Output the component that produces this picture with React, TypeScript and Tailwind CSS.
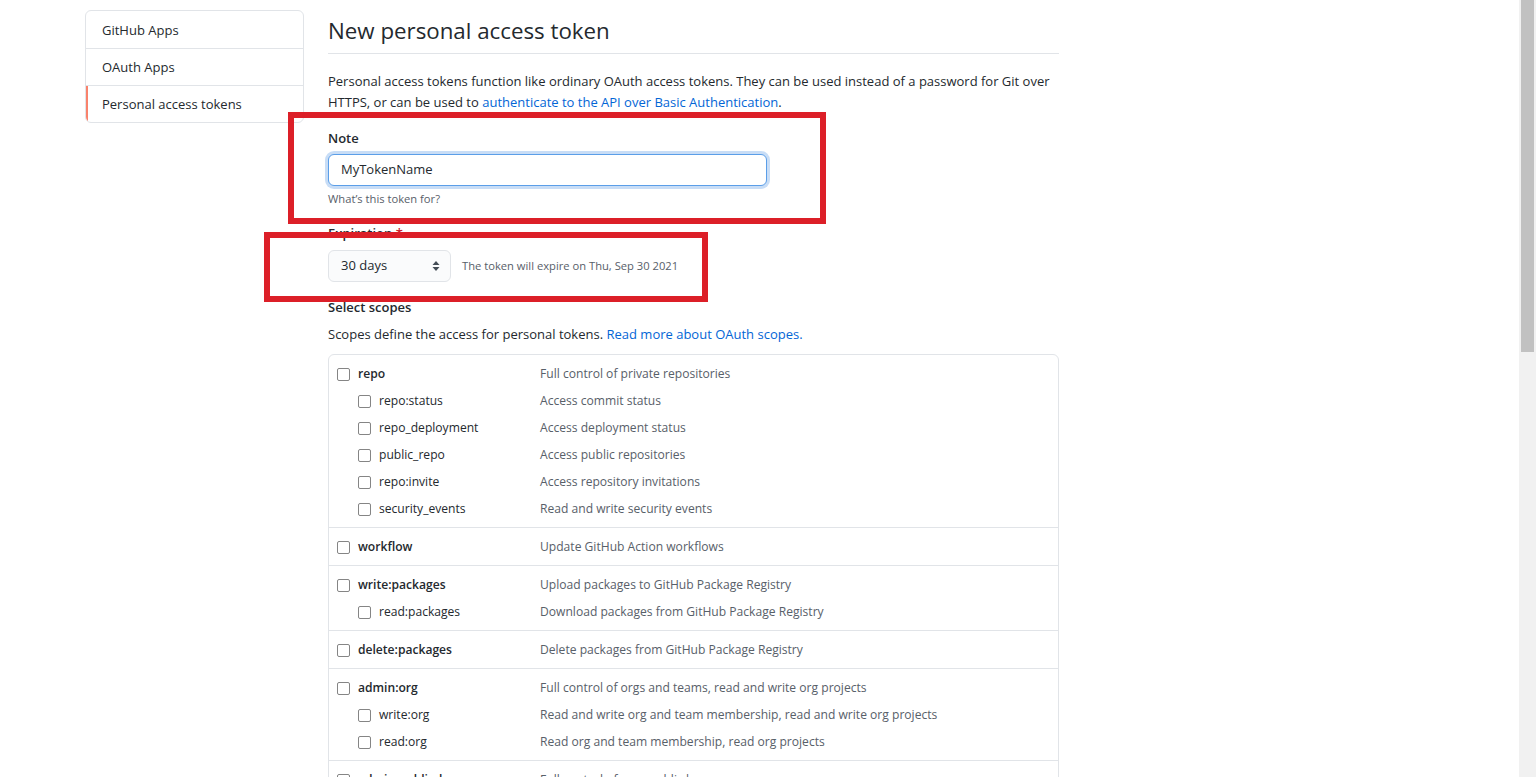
import React from "react";

interface Scope {
  name: string;
  description: string;
  children?: { name: string; description: string }[];
}

const scopes: Scope[] = [
  {
    name: "repo",
    description: "Full control of private repositories",
    children: [
      { name: "repo:status", description: "Access commit status" },
      { name: "repo_deployment", description: "Access deployment status" },
      { name: "public_repo", description: "Access public repositories" },
      { name: "repo:invite", description: "Access repository invitations" },
      { name: "security_events", description: "Read and write security events" },
    ],
  },
  { name: "workflow", description: "Update GitHub Action workflows" },
  {
    name: "write:packages",
    description: "Upload packages to GitHub Package Registry",
    children: [
      { name: "read:packages", description: "Download packages from GitHub Package Registry" },
    ],
  },
  { name: "delete:packages", description: "Delete packages from GitHub Package Registry" },
  {
    name: "admin:org",
    description: "Full control of orgs and teams, read and write org projects",
    children: [
      { name: "write:org", description: "Read and write org and team membership, read and write org projects" },
      { name: "read:org", description: "Read org and team membership, read org projects" },
    ],
  },
  {
    name: "admin:public_key",
    description: "Full control of user public keys",
    children: [
      { name: "write:public_key", description: "Write user public keys" },
      { name: "read:public_key", description: "Read user public keys" },
    ],
  },
];

const menuItems = ["GitHub Apps", "OAuth Apps", "Personal access tokens"];

function Checkbox() {
  return (
    <span className="inline-block h-[13px] w-[13px] shrink-0 rounded-[2px] border border-[#858585] bg-white" />
  );
}

function SelectArrows() {
  return (
    <svg width="8" height="12" viewBox="0 0 8 12" className="text-[#444d56]">
      <path d="M4 1 L7.5 5 H0.5 Z" fill="currentColor" />
      <path d="M4 11 L7.5 7 H0.5 Z" fill="currentColor" />
    </svg>
  );
}

export default function App() {
  return (
    <div
      className="relative flex h-[777px] w-full overflow-hidden bg-white text-[#24292e]"
      style={{ fontFamily: '"Open Sans", "Noto Sans", Arial, sans-serif' }}
    >
      <div className="flex flex-1 gap-[24px] pl-[85px]">
        {/* Sidebar menu */}
        <nav className="mt-[10px] h-fit w-[219px] overflow-hidden rounded-[6px] border border-[#e1e4e8]">
          {menuItems.map((item, i) => (
            <div
              key={item}
              className={
                "flex h-[37px] items-center px-[16px] pt-[2px] text-[13px] " +
                (i > 0 ? "border-t border-[#e1e4e8] " : "") +
                (i === 2 ? "shadow-[inset_2px_0_0_#f9826c]" : "")
              }
            >
              {item}
            </div>
          ))}
        </nav>

        {/* Main */}
        <main className="w-[731px]">
          <div className="border-b border-[#e1e4e8] pb-[4px] pt-[13px]">
            <h2 className="text-[22.3px] font-normal leading-[36px]">New personal access token</h2>
          </div>

          <p className="mt-[17px] text-[13px] leading-[21px]">
            Personal access tokens function like ordinary OAuth access tokens. They can be used instead of a password for Git over
            HTTPS, or can be used to{" "}
            <a className="text-[#0366d6]">authenticate to the API over Basic Authentication</a>.
          </p>

          {/* Note */}
          <div className="mt-[15px] text-[13px] font-semibold leading-[21px]">Note</div>
          <div className="mt-[5px] flex h-[32px] w-[439px] items-center rounded-[6px] border border-[#5b9ee8] bg-white px-[12px] text-[13px] shadow-[0_0_0_3px_rgba(3,102,214,0.22)]">
            MyTokenName
          </div>
          <div className="mt-[4px] text-[11.2px] leading-[18px] text-[#586069]">What’s this token for?</div>

          {/* Expiration */}
          <div className="mt-[15px] text-[13px] font-semibold leading-[21px]">
            Expiration <span className="text-[#cb2431]">*</span>
          </div>
          <div className="mt-[6px] flex items-center gap-[11px]">
            <div className="flex h-[32px] w-[123px] items-center justify-between rounded-[6px] border border-[#e1e4e8] bg-[#fafbfc] pl-[12px] pr-[10px] text-[13px]">
              <span>30 days</span>
              <SelectArrows />
            </div>
            <span className="text-[11.2px] text-[#586069]">The token will expire on Thu, Sep 30 2021</span>
          </div>

          {/* Scopes */}
          <div className="mt-[15px] text-[13px] font-semibold leading-[21px]">Select scopes</div>
          <p className="mt-[6px] text-[13px] leading-[21px]">
            Scopes define the access for personal tokens.{" "}
            <a className="text-[#0366d6]">Read more about OAuth scopes.</a>
          </p>

          <div className="mt-[9px] rounded-[6px] border border-[#e1e4e8]">
            {scopes.map((scope, i) => (
              <div
                key={scope.name}
                className={"px-[8px] py-[5px] " + (i > 0 ? "border-t border-[#e1e4e8]" : "")}
              >
                <div className="flex h-[27px] items-center pt-[2px] text-[12.1px]">
                  <div className="flex w-[203px] items-center gap-[8px]">
                    <Checkbox />
                    <span className="font-semibold">{scope.name}</span>
                  </div>
                  <span className="text-[#586069]">{scope.description}</span>
                </div>
                {scope.children?.map((child) => (
                  <div key={child.name} className="flex h-[27px] items-center pt-[2px] text-[12.1px]">
                    <div className="flex w-[203px] items-center gap-[8px] pl-[21px]">
                      <Checkbox />
                      <span>{child.name}</span>
                    </div>
                    <span className="text-[#586069]">{child.description}</span>
                  </div>
                ))}
              </div>
            ))}
          </div>
        </main>
      </div>

      {/* Scrollbar */}
      <div className="flex w-[17px] shrink-0 justify-center bg-[#f1f1f1]">
        <div className="h-[352px] w-[13px] bg-[#c1c1c1]" />
      </div>

      {/* Red annotation boxes */}
      <div className="pointer-events-none absolute left-[288px] top-[112px] h-[112px] w-[538px] border-[6px] border-[#dc1f28]" />
      <div className="pointer-events-none absolute left-[264px] top-[232px] h-[70px] w-[444px] border-[6px] border-[#dc1f28]" />
    </div>
  );
}
